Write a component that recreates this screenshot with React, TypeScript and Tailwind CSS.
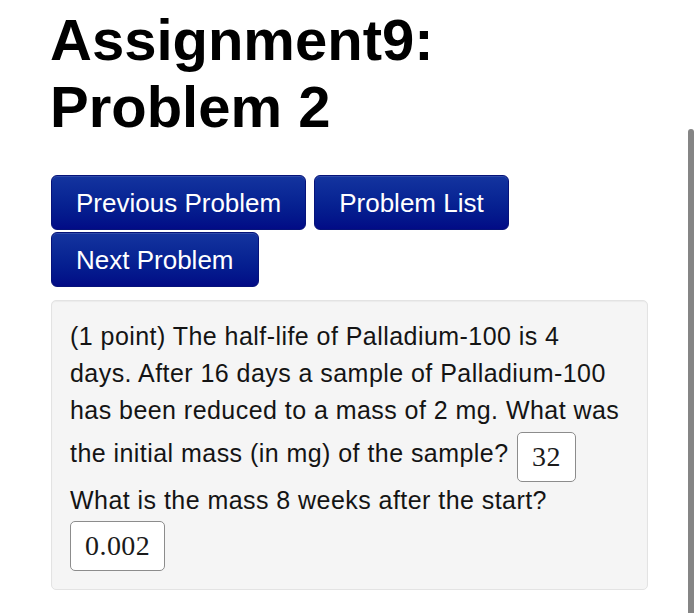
import React from "react";

const sans = { fontFamily: '"Liberation Sans", Arial, sans-serif' };

function NavButton({ children }: { children: React.ReactNode }) {
  return (
    <button
      type="button"
      className="inline-flex h-[55px] items-center rounded-[6px] border border-[#06137a] bg-linear-to-b from-[#14349f] to-[#020b86] px-[24px] text-[26px] leading-none text-white shadow-[inset_0_1px_0_rgba(255,255,255,0.12)]"
    >
      {children}
    </button>
  );
}

function AnswerBox({ value, className = "" }: { value: string; className?: string }) {
  return (
    <span
      className={
        "inline-flex h-[50px] items-center rounded-[5px] border border-[#8c8c8c] bg-white px-[14px] align-middle text-[28px] leading-none text-[#1a1a1a] " +
        className
      }
      style={{ fontFamily: '"Liberation Serif", "Times New Roman", serif' }}
    >
      {value}
    </span>
  );
}

export default function App() {
  return (
    <div className="relative h-[613px] w-[700px] overflow-hidden bg-white" style={sans}>
      <div className="pl-[50px] pr-[52px] pt-[6px]">
        <h1 className="text-[58px] font-bold leading-[67px] text-black">
          Assignment9:
          <br />
          Problem 2
        </h1>

        <div className="mt-[35px] flex flex-wrap gap-x-[8px] gap-y-[2px] pl-[1px]">
          <NavButton>Previous Problem</NavButton>
          <NavButton>Problem List</NavButton>
          <NavButton>Next Problem</NavButton>
        </div>

        <div className="mt-[13px] ml-[1px] rounded-[5px] border border-[#e3e3e3] bg-[#f5f5f5] pl-[18px] pr-[12px] pt-[17px] pb-[18px] shadow-[inset_0_1px_1px_rgba(0,0,0,0.04)]">
          <p className="whitespace-nowrap text-[25px] leading-[37px] tracking-[0.45px] text-[#141414]">
            (1 point) The half-life of Palladium-100 is 4
            <br />
            days. After 16 days a sample of Palladium-100
            <br />
            has been reduced to a mass of 2 mg. What was
            <br />
            the initial mass (in mg) of the sample?{" "}
            <AnswerBox value="32" className="ml-[1px] mt-[3px]" />
            <br />
            What is the mass 8 weeks after the start?
            <br />
            <AnswerBox value="0.002" className="mt-[2px]" />
          </p>
        </div>
      </div>

      <div className="absolute right-[6px] top-[129px] bottom-0 w-[6px] rounded-t-full bg-[#858585]" />
    </div>
  );
}
